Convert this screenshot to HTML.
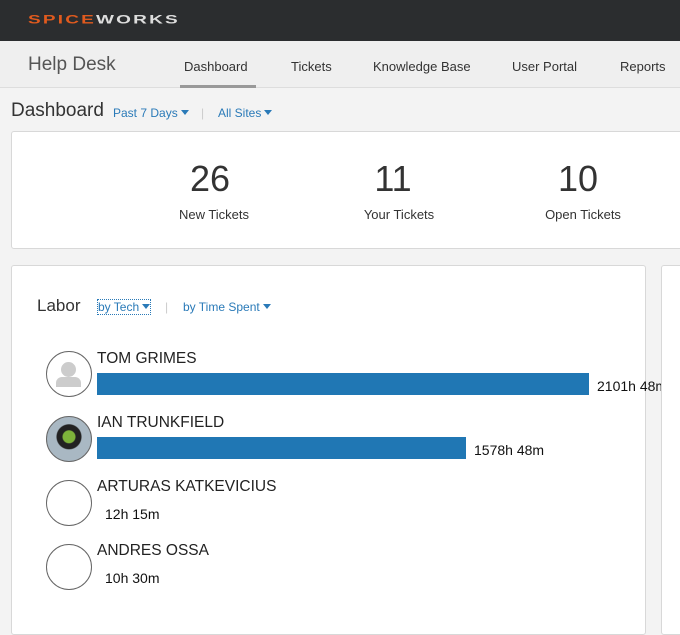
<!DOCTYPE html>
<html><head><style>
*{margin:0;padding:0;box-sizing:border-box}
body{width:680px;height:621px;overflow:hidden;background:#f3f3f3;font-family:"Liberation Sans",sans-serif;position:relative;color:#333}
.a{position:absolute}
.top{left:0;top:0;width:680px;height:41px;background:#2b2d2f}
.nav{left:0;top:41px;width:680px;height:47px;background:#efefef;border-bottom:1px solid #ddd}
.blue{color:#2a7ab8}
.card{background:#fff;border:1px solid #d8d8d8;border-radius:3px}
.num{font-size:36px;color:#333;text-align:center;width:120px}
.lab{font-size:13px;text-align:center;width:120px}
.av{width:46px;height:46px;border-radius:50%;border:1.5px solid #666;background:#fff}
.name{font-size:15.5px;color:#222}
.bar{height:22px;background:#2077b4}
.hrs{font-size:14px;color:#111}
.caret{display:inline-block;border-left:4px solid transparent;border-right:4px solid transparent;border-top:5px solid #2a7ab8;margin-left:3px;vertical-align:2px}
</style></head><body>
<div class="a top"></div>
<div class="a" style="left:28px;top:13px;font-size:19px;letter-spacing:2.2px;font-weight:bold;transform:scaleY(.65);transform-origin:left top"><span style="color:#e05a1e">SPICE</span><span style="color:#ddd">WORKS</span></div>
<div class="a nav"></div>
<div class="a" style="left:28px;top:54px;font-size:19px;color:#555">Help Desk</div>
<div class="a" style="left:184px;top:59px;font-size:13px;color:#333">Dashboard</div>
<div class="a" style="left:180px;top:85px;width:76px;height:3px;background:#999"></div>
<div class="a" style="left:291px;top:59px;font-size:13px">Tickets</div>
<div class="a" style="left:373px;top:59px;font-size:13px">Knowledge Base</div>
<div class="a" style="left:512px;top:59px;font-size:13px">User Portal</div>
<div class="a" style="left:620px;top:59px;font-size:13px">Reports</div>
<div class="a" style="left:11px;top:100px;font-size:19px;color:#333">Dashboard</div>
<div class="a blue" style="left:113px;top:106px;font-size:12px">Past 7 Days<span class="caret"></span></div>
<div class="a" style="left:201px;top:106px;font-size:12px;color:#ccc">|</div>
<div class="a blue" style="left:218px;top:106px;font-size:12px">All Sites<span class="caret"></span></div>
<div class="a card" style="left:11px;top:131px;width:680px;height:118px"></div>
<div class="a num" style="left:150px;top:158px">26</div><div class="a lab" style="left:154px;top:207px">New Tickets</div>
<div class="a num" style="left:333px;top:158px">11</div><div class="a lab" style="left:339px;top:207px">Your Tickets</div>
<div class="a num" style="left:518px;top:158px">10</div><div class="a lab" style="left:523px;top:207px">Open Tickets</div>
<div class="a card" style="left:11px;top:265px;width:635px;height:370px"></div>
<div class="a" style="left:37px;top:296px;font-size:17px">Labor</div>
<div class="a blue" style="left:98px;top:300px;font-size:12px;outline:1px dotted #2a7ab8">by Tech<span class="caret"></span></div>
<div class="a" style="left:165px;top:300px;font-size:12px;color:#ccc">|</div>
<div class="a blue" style="left:183px;top:300px;font-size:12px">by Time Spent<span class="caret"></span></div>
<div class="a av" style="left:46px;top:351px"><div class="a" style="left:14px;top:10px;width:15px;height:15px;border-radius:50%;background:#ccc"></div><div class="a" style="left:9px;top:25px;width:25px;height:10px;background:#ccc;border-radius:6px 6px 0 0"></div></div>
<div class="a name" style="left:97px;top:350px">TOM GRIMES</div>
<div class="a bar" style="left:97px;top:373px;width:492px"></div>
<div class="a hrs" style="left:597px;top:378px">2101h 48m</div>
<div class="a av" style="left:46px;top:416px;background:radial-gradient(circle at 50% 45%,#7db33a 0 6px,#222 7px 12px,#a9b8c3 13px)"></div>
<div class="a name" style="left:97px;top:414px">IAN TRUNKFIELD</div>
<div class="a bar" style="left:97px;top:437px;width:369px"></div>
<div class="a hrs" style="left:474px;top:442px">1578h 48m</div>
<div class="a av" style="left:46px;top:480px"></div>
<div class="a name" style="left:97px;top:478px">ARTURAS KATKEVICIUS</div>
<div class="a hrs" style="left:105px;top:506px">12h 15m</div>
<div class="a av" style="left:46px;top:544px"></div>
<div class="a name" style="left:97px;top:542px">ANDRES OSSA</div>
<div class="a hrs" style="left:105px;top:570px">10h 30m</div>
<div class="a card" style="left:661px;top:265px;width:40px;height:370px"></div>
</body></html>
